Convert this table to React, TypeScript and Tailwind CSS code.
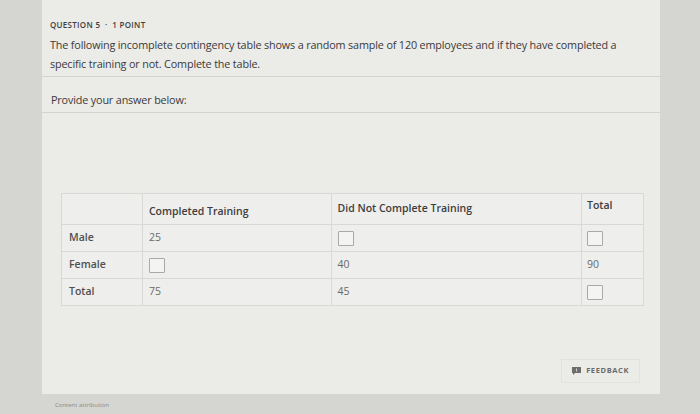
const rows = [
  { label: 'Male', a: '25', b: null, t: null },
  { label: 'Female', a: null, b: '40', t: '90' },
  { label: 'Total', a: '75', b: '45', t: null },
];

function Box() {
  return <div className="w-[16px] h-[15px] border border-[#a9a9a7] bg-[#f4f4f2] rounded-[1px]" />;
}

function Cell({ value }: { value: string | null }) {
  return value === null ? <Box /> : <span>{value}</span>;
}

export default function App() {
  return (
    <div className="w-[700px] h-[414px] overflow-hidden bg-[#d5d5d1] font-['Open_Sans',sans-serif] text-[#4a4a4a]">
      <div className="ml-[42px] w-[618px] h-[394px] bg-[#ebebe8] flex flex-col">
        {/* question */}
        <div className="px-[8px] pt-[20px] pb-[3px] border-b border-[#d2d2cf]">
          <div className="text-[8px] leading-[10px] font-semibold tracking-[0.3px] text-[#3f3f3f] whitespace-pre">QUESTION 5  ·  1 POINT</div>
          <p className="mt-[5px] w-[580px] text-[10.8px] leading-[19px] text-[#3a3a3a] tracking-[-0.15px]">
            The following incomplete contingency table shows a random sample of 120 employees and if they have completed a specific training or not. Complete the table.
          </p>
        </div>

        <div className="px-[9px] pt-[15px] pb-[5px] border-b border-[#d2d2cf] text-[10.8px] leading-[15px] text-[#3a3a3a] tracking-[-0.15px]">
          Provide your answer below:
        </div>

        {/* table */}
        <div className="pt-[80px] pl-[19px]">
          <table className="w-[583px] border-collapse bg-[#eeeeec] text-[10.5px]">
            <colgroup>
              <col className="w-[81px]" />
              <col className="w-[189px]" />
              <col className="w-[251px]" />
              <col className="w-[62px]" />
            </colgroup>
            <thead>
              <tr className="h-[31px] text-[#3d3d3d]">
                <th className="border border-[#d8d8d5]" />
                <th className="border border-[#d8d8d5] text-left font-semibold px-[6px] pt-[6px]">Completed Training</th>
                <th className="border border-[#d8d8d5] text-left font-semibold px-[6px]">Did Not Complete Training</th>
                <th className="border border-[#d8d8d5] text-left font-semibold px-[5px] pb-[6px]">Total</th>
              </tr>
            </thead>
            <tbody>
              {rows.map((r) => (
                <tr key={r.label} className="h-[27px]">
                  <td className="border border-[#d8d8d5] px-[7px] font-semibold text-[#505050]">{r.label}</td>
                  <td className="border border-[#d8d8d5] px-[6px] text-[#6a6a6a]"><Cell value={r.a} /></td>
                  <td className="border border-[#d8d8d5] px-[6px] text-[#6a6a6a]"><Cell value={r.b} /></td>
                  <td className="border border-[#d8d8d5] px-[5px] text-[#6a6a6a]"><Cell value={r.t} /></td>
                </tr>
              ))}
            </tbody>
          </table>
        </div>

        <div className="flex justify-end pr-[20px] mt-[53px]">
          <div className="flex items-center gap-[5px] h-[24px] px-[10px] border border-[#e2e2df]">
            <svg width="9" height="8" viewBox="0 0 9 8">
              <path d="M0 0h9v6H3L1 8V6H0z" fill="#6d6d6b" />
              <rect x="4" y="1.5" width="1" height="3" fill="#d0d0cd" />
            </svg>
            <span className="text-[7.5px] font-bold tracking-[0.6px] text-[#6b6b69]">FEEDBACK</span>
          </div>
        </div>
      </div>
      <div className="ml-[55px] mt-[7px] text-[6px] text-[#8a8a88]">Content attribution</div>
    </div>
  );
}
